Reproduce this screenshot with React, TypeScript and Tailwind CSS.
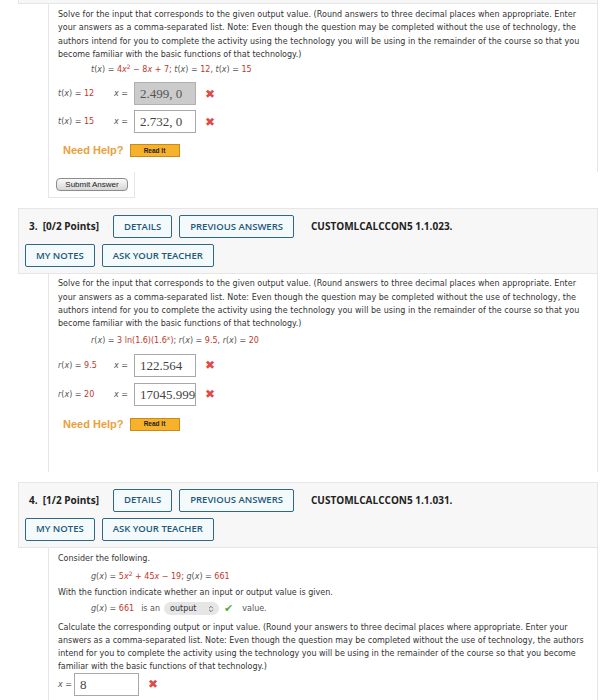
import React from "react";
import { ChevronsUpDown } from "lucide-react";

const red = "text-[#c0392b]";

function HeaderButton({ children }: { children: React.ReactNode }) {
  return (
    <button className="h-[23px] rounded-[2px] border border-[#2e6887] bg-[#f4f9fb] px-[10px] font-['Open_Sans',sans-serif] text-[9.5px] font-semibold text-[#22597a]">
      {children}
    </button>
  );
}

interface QuestionHeaderProps {
  num: number;
  points: string;
  code: string;
}

const QuestionHeader = ({ num, points, code }: QuestionHeaderProps) => (
  <div className="ml-[18px] w-[580px] border border-[#e6e6e6] bg-[#f7f7f7] px-[6px] pt-[6px] pb-[6px] font-['Open_Sans',sans-serif]">
    <div className="flex items-center gap-[7px]">
      <span className="ml-[4px] mr-[7px] text-[10px] font-bold text-[#222]">
        {num}.&nbsp; [{points} Points]
      </span>
      <HeaderButton>DETAILS</HeaderButton>
      <HeaderButton>PREVIOUS ANSWERS</HeaderButton>
      <span className="ml-[10px] text-[10px] font-bold text-[#222]">{code}</span>
    </div>
    <div className="mt-[6px] flex gap-[7px]">
      <HeaderButton>MY NOTES</HeaderButton>
      <HeaderButton>ASK YOUR TEACHER</HeaderButton>
    </div>
  </div>
);

const XMark = () => (
  <span className="ml-[9px] font-['DejaVu_Sans',sans-serif] text-[12px] leading-none text-[#e04a4a]">✖</span>
);

interface AnswerRowProps {
  fn: string;
  value: string;
  answer: string;
  gray?: boolean;
  className?: string;
}

const AnswerRow = ({ fn, value, answer, gray, className }: AnswerRowProps) => (
  <div className={"flex h-[23px] items-center " + (className ?? "")}>
    <span className="w-[56px] text-[#555]">
      <i>{fn}</i>(<i>x</i>) = <span className={red}>{value}</span>
    </span>
    <span className="w-[20px] text-[#555]">
      <i>x</i> =
    </span>
    <div
      className={
        "flex h-[23px] w-[62px] items-center border pl-[5px] font-['Liberation_Serif',serif] text-[13px] " +
        (gray ? "border-[#b0b0b0] bg-[#cbcbcb] text-[#555]" : "border-[#a8a8a8] bg-white text-[#444]")
      }
    >
      {answer}
    </div>
    <XMark />
  </div>
);

const NeedHelp = ({ className }: { className?: string }) => (
  <div className={"ml-[5px] flex h-[15px] items-center " + (className ?? "")}>
    <span className="font-['Liberation_Sans',sans-serif] text-[11px] font-bold text-[#e9a03b]">Need Help?</span>
    <button className="ml-[6px] h-[13px] w-[50px] border border-[#c98a1c] bg-[#f7b22c] font-['Liberation_Sans',sans-serif] text-[6.5px] font-bold leading-none text-[#222]">
      Read It
    </button>
  </div>
);

// lines set one by one so the breaks match the reference
const Instructions = () => (
  <div className="whitespace-nowrap">
    <p className="tracking-[0.03px]">
      Solve for the input that corresponds to the given output value. (Round answers to three decimal places when appropriate. Enter
    </p>
    <p className="tracking-[0.04px]">
      your answers as a comma-separated list. Note: Even though the question may be completed without the use of technology, the
    </p>
    <p className="tracking-[0.04px]">
      authors intend for you to complete the activity using the technology you will be using in the remainder of the course so that you
    </p>
    <p>become familiar with the basic functions of that technology.)</p>
  </div>
);

const contentBox =
  "ml-[48px] w-[550px] border-x border-[#e6e6e6] bg-white pl-[9px] pr-[8px] font-['DejaVu_Sans',Verdana,sans-serif] text-[8px] leading-[13.3px] text-[#333]";

export default function App() {
  return (
    <div className="h-[700px] w-[609px] overflow-hidden bg-white">
      <div className="ml-[18px] h-[4px] w-[580px] border-x border-b border-[#e6e6e6] bg-[#f7f7f7]" />

      {/* question 2 */}
      <div className={contentBox + " pt-[4px] pb-[14px]"}>
        <Instructions />
        <div className="mt-[2px] ml-[33px] text-[#555]">
          <i>t</i>(<i>x</i>) = <span className={red}>4<i>x</i><sup className="text-[6px]">2</sup> − 8<i>x</i> + 7</span>; <i>t</i>(<i>x</i>) ={" "}
          <span className={red}>12</span>, <i>t</i>(<i>x</i>) = <span className={red}>15</span>
        </div>
        <AnswerRow className="mt-[6px]" fn="t" value="12" answer="2.499, 0" gray />
        <AnswerRow className="mt-[5px]" fn="t" value="15" answer="2.732, 0" />
        <NeedHelp className="mt-[10px]" />
      </div>
      <div className="ml-[48px] flex h-[26px] w-[87px] items-center border-x border-b border-[#e6e6e6] pl-[7px]">
        <button className="h-[13px] w-[72px] rounded-[4px] border border-[#8c8c8c] bg-gradient-to-b from-[#fafafa] to-[#d6d6d6] font-['Liberation_Sans',sans-serif] text-[8px] leading-none text-[#222]">
          Submit Answer
        </button>
      </div>

      {/* question 3 */}
      <div className="mt-[10px]">
        <QuestionHeader num={3} points="0/2" code="CUSTOMLCALCCON5 1.1.023." />
      </div>
      <div className={contentBox + " pt-[3px] pb-[40px]"}>
        <Instructions />
        <div className="mt-[3px] ml-[33px] text-[#555]">
          <i>r</i>(<i>x</i>) = <span className={red}>3 ln(1.6)(1.6<sup className="text-[6px]"><i>x</i></sup>)</span>; <i>r</i>(<i>x</i>) ={" "}
          <span className={red}>9.5</span>, <i>r</i>(<i>x</i>) = <span className={red}>20</span>
        </div>
        <AnswerRow className="mt-[7px]" fn="r" value="9.5" answer="122.564" />
        <AnswerRow className="mt-[6px]" fn="r" value="20" answer="17045.999" />
        <NeedHelp className="mt-[11px]" />
      </div>

      {/* question 4 */}
      <div className="mt-[10px]">
        <QuestionHeader num={4} points="1/2" code="CUSTOMLCALCCON5 1.1.031." />
      </div>
      <div className={contentBox + " pt-[4px] pb-[10px]"}>
        <p>Consider the following.</p>
        <div className="mt-[5px] ml-[33px] text-[#555]">
          <i>g</i>(<i>x</i>) = <span className={red}>5<i>x</i><sup className="text-[6px]">2</sup> + 45<i>x</i> − 19</span>; <i>g</i>(<i>x</i>) ={" "}
          <span className={red}>661</span>
        </div>
        <p className="mt-[2px]">With the function indicate whether an input or output value is given.</p>
        <div className="mt-[3px] ml-[33px] flex h-[14px] items-center text-[#555]">
          <span>
            <i>g</i>(<i>x</i>) = <span className={red}>661</span>
          </span>
          <span className="ml-[7px]">is an</span>
          <div className="ml-[4px] flex h-[13px] w-[55px] items-center justify-between rounded-full bg-[#e6e6e6] pl-[6px] pr-[4px] text-[#333]">
            <span>output</span>
            <ChevronsUpDown size={8} strokeWidth={2.5} className="text-[#555]" />
          </div>
          <span className="ml-[5px] font-['DejaVu_Sans',sans-serif] text-[11px] leading-none text-[#5cad4c]">✔</span>
          <span className="ml-[9px]">value.</span>
        </div>
        <p className="mt-[5px] whitespace-nowrap leading-[13px]">
          Calculate the corresponding output or input value. (Round your answers to three decimal places where appropriate. Enter your
          <br />
          answers as a comma-separated list. Note: Even though the question may be completed without the use of technology, the authors
          <br />
          intend for you to complete the activity using the technology you will be using in the remainder of the course so that you become
          <br />
          familiar with the basic functions of that technology.)
        </p>
        <div className="flex h-[23px] items-center">
          <span className="w-[16px] text-[#555]">
            <i>x</i> =
          </span>
          <div className="flex h-[23px] w-[65px] items-center border border-[#a8a8a8] pl-[5px] font-['Liberation_Serif',serif] text-[13px] text-[#444]">
            8
          </div>
          <XMark />
        </div>
      </div>
    </div>
  );
}
